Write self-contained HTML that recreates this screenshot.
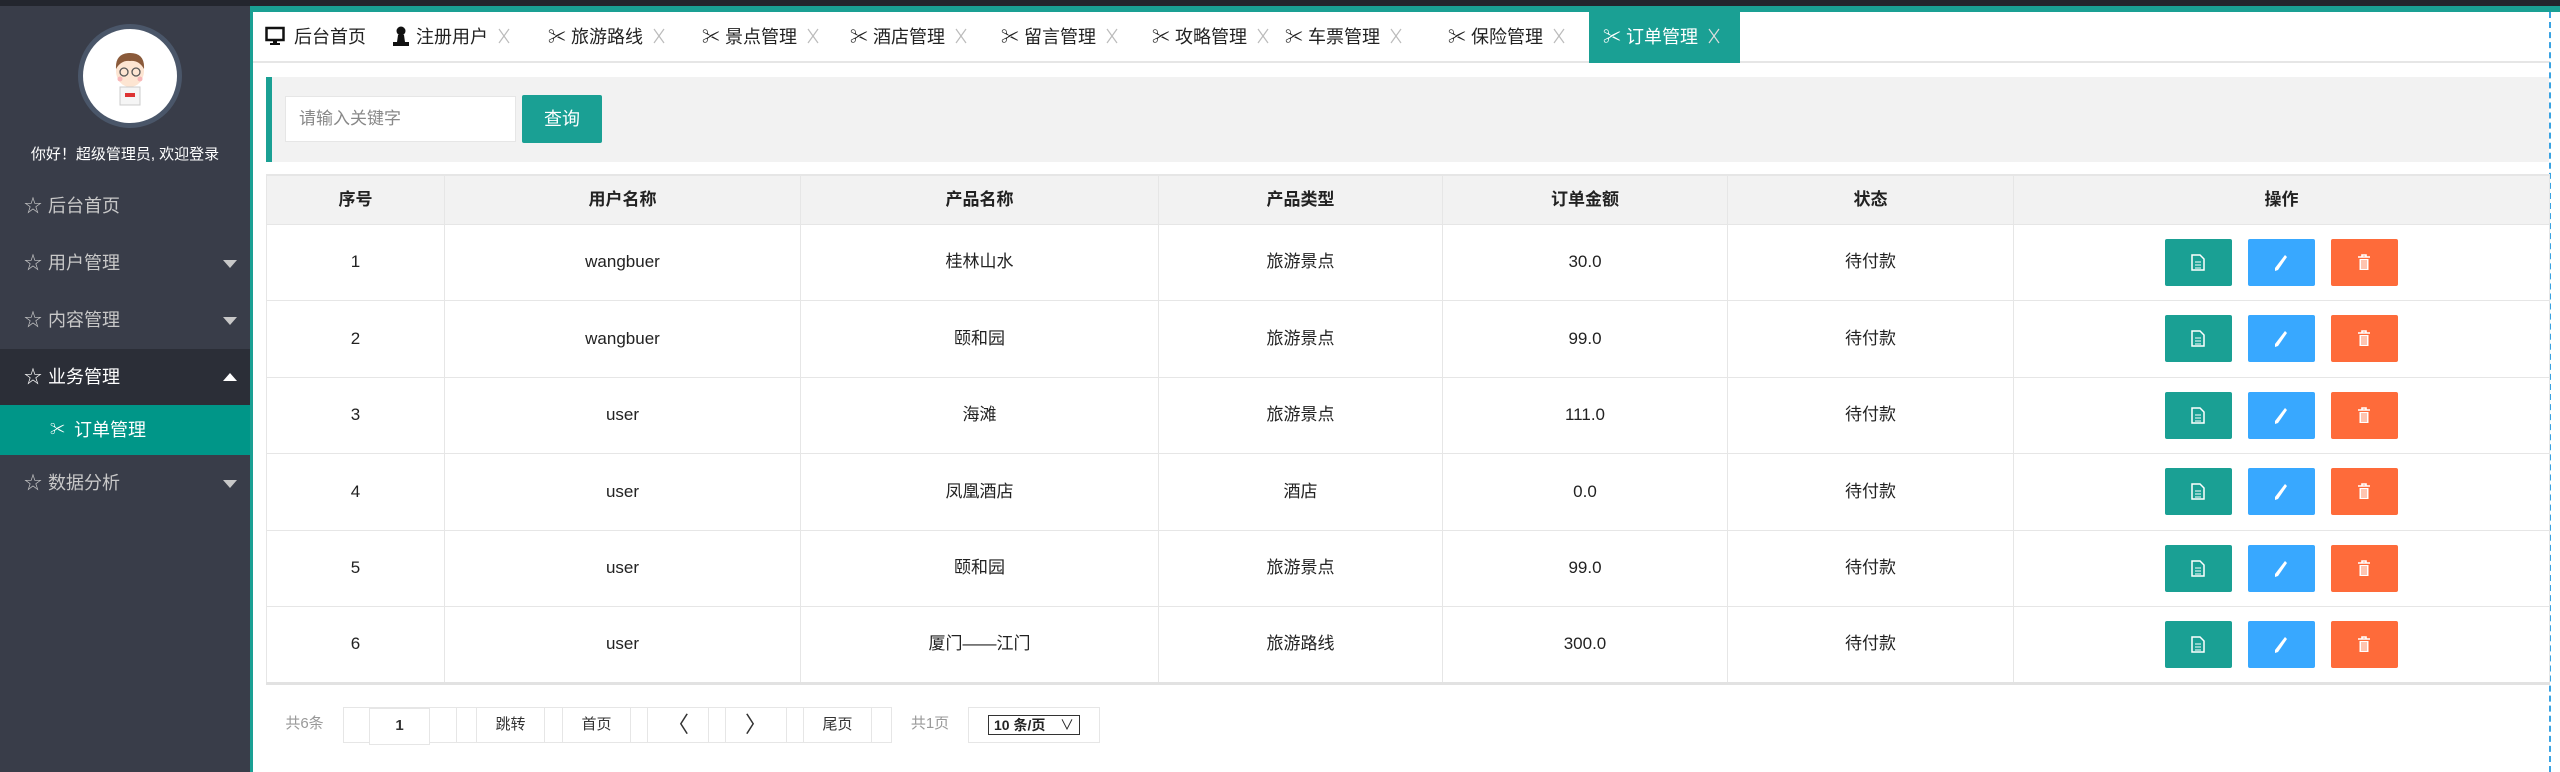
<!DOCTYPE html>
<html><head><meta charset="utf-8"><style>
*{margin:0;padding:0;box-sizing:border-box}
body{width:2560px;height:772px;overflow:hidden;background:#fff;font-family:"Liberation Sans","Noto Sans CJK SC",sans-serif;position:relative;color:#222}
.topbar{position:absolute;left:0;top:0;width:2560px;height:6px;background:#23262e}
.tealbar{position:absolute;left:250px;top:6px;width:2310px;height:6px;background:#1aa094}
.side{position:absolute;left:0;top:6px;width:250px;height:766px;background:#393d49}
.sideline{position:absolute;left:250px;top:6px;width:3px;height:766px;background:#1aa094}
.av{position:absolute;left:78px;top:24px;width:104px;height:104px;border-radius:50%;background:#4a5669;}
.av .in{position:absolute;left:5px;top:5px;width:94px;height:94px;border-radius:50%;background:#fff;overflow:hidden}
.welcome{position:absolute;left:0;top:143px;width:250px;text-align:center;color:#fff;font-size:15px}
.mi{position:absolute;left:0;width:250px;height:57px;color:#c8c8c8;font-size:18px;line-height:57px;padding-left:48px}
.mi .st{position:absolute;left:24px;top:0;font-size:18px}
.mi .ar{position:absolute;left:223px;top:25px;width:0;height:0;border-left:7px solid transparent;border-right:7px solid transparent;border-top:8px solid #c8c8c8}
.mi .up{border-top:none;border-bottom:8px solid #fff;top:24px}
.tabs{position:absolute;left:253px;top:12px;width:2297px;height:51px;border-bottom:2px solid #e6e6e6;background:#fff}
.tab{position:absolute;top:12px;height:51px;line-height:51px;font-size:18px;color:#222;white-space:nowrap}
.tab .x{display:inline-block;margin-left:10px;vertical-align:-1px}
.act{background:#1aa094;color:#fff;left:1589px;width:151px;padding-left:14px}
.dash{position:absolute;left:2549px;top:12px;height:760px;border-left:2px dashed #3aa3e3}
.search{position:absolute;left:266px;top:77px;width:2283px;height:85px;background:#f2f2f2;border-left:6px solid #1aa094}
.inp{position:absolute;left:285px;top:96px;width:231px;height:46px;background:#fff;border:1px solid #e6e6e6;font-size:17px;color:#888;line-height:44px;padding-left:13px}
.btn{position:absolute;left:522px;top:95px;width:80px;height:48px;background:#1aa094;color:#fff;font-size:18px;text-align:center;line-height:48px;border-radius:2px}
table{position:absolute;left:266px;top:174px;width:2283px;border-collapse:collapse;table-layout:fixed}
td,th{border:1px solid #e6e6e6;text-align:center;font-size:17px;line-height:24px;vertical-align:middle}
th{height:49px;background:#f2f2f2;font-weight:bold;border-top:2px solid #e6e6e6}
td{height:76.5px}
tr.last td{border-bottom:3px solid #e2e2e2}
.ob{display:inline-block;width:67px;height:47px;vertical-align:middle;margin:0 8px;border-radius:2px;position:relative}
.g{background:#1aa094}.b{background:#38a8ff}.o{background:#fe6b3a}
.ob svg{position:absolute;left:26px;top:15px}
.pg{position:absolute;top:707px;height:36px;border:1px solid #e6e6e6;background:#fff;font-size:15px;text-align:center;line-height:34px;color:#333}
.pgw{position:absolute;left:266px;top:707px;width:834px;height:36px;border:1px solid #e6e6e6}
.gray{color:#999}
</style></head><body>
<div class="topbar"></div>
<div class="side"></div>
<div class="tealbar"></div>
<div class="sideline"></div>
<div class="av"><div class="in">
<svg width="94" height="94" viewBox="0 0 94 94"><ellipse cx="47" cy="42" rx="14" ry="16" fill="#fde5d2"/><path d="M33 40 Q32 24 47 24 Q62 24 61 40 Q56 31 47 32 Q38 31 33 40Z" fill="#8a5a3a"/><circle cx="41" cy="43" r="4" fill="none" stroke="#555" stroke-width="1.3"/><circle cx="53" cy="43" r="4" fill="none" stroke="#555" stroke-width="1.3"/><rect x="37" y="58" width="20" height="18" fill="#f5f5f5" stroke="#ccc"/><rect x="42" y="64" width="10" height="4" fill="#d33"/><circle cx="37" cy="50" r="2.5" fill="#f8b7b7"/><circle cx="57" cy="50" r="2.5" fill="#f8b7b7"/></svg>
</div></div>
<div class="welcome">你好！超级管理员, 欢迎登录</div>
<div class="mi" style="top:178px"><span class="st">☆</span>后台首页</div>
<div class="mi" style="top:235px"><span class="st">☆</span>用户管理<span class="ar"></span></div>
<div class="mi" style="top:292px"><span class="st">☆</span>内容管理<span class="ar"></span></div>
<div class="mi" style="top:349px;height:56px;background:#2b2e37;color:#fff"><span class="st">☆</span>业务管理<span class="ar up"></span></div>
<div class="mi" style="top:405px;height:50px;line-height:50px;background:#009688;color:#fff;padding-left:74px"><span class="st" style="left:50px;font-size:15px">✂</span>订单管理</div>
<div class="mi" style="top:455px"><span class="st">☆</span>数据分析<span class="ar"></span></div>

<div class="tabs"></div>
<div class="tab" style="left:265px"><svg width="20" height="20" viewBox="0 0 20 20" style="vertical-align:-3px;margin-right:9px"><rect x="1.5" y="2" width="17" height="12" fill="none" stroke="#111" stroke-width="2.5"/><rect x="8" y="14" width="4" height="3" fill="#111"/><rect x="5" y="17" width="10" height="2" fill="#111"/></svg>后台首页</div>
<div class="tab" style="left:392px"><svg width="18" height="20" viewBox="0 0 18 20" style="vertical-align:-3px;margin-right:6px"><circle cx="9" cy="5" r="4.5" fill="#111"/><path d="M6 9h6l1 7h4v4H1v-4h4z" fill="#111"/></svg>注册用户<svg class="x" width="12" height="16" viewBox="0 0 12 16"><path d="M1 1L11 15M11 1L1 15" stroke="#bbb" stroke-width="1.2"/></svg></div>
<div class="tab" style="left:548px">✂ 旅游路线<svg class="x" width="12" height="16" viewBox="0 0 12 16"><path d="M1 1L11 15M11 1L1 15" stroke="#bbb" stroke-width="1.2"/></svg></div>
<div class="tab" style="left:702px">✂ 景点管理<svg class="x" width="12" height="16" viewBox="0 0 12 16"><path d="M1 1L11 15M11 1L1 15" stroke="#bbb" stroke-width="1.2"/></svg></div>
<div class="tab" style="left:850px">✂ 酒店管理<svg class="x" width="12" height="16" viewBox="0 0 12 16"><path d="M1 1L11 15M11 1L1 15" stroke="#bbb" stroke-width="1.2"/></svg></div>
<div class="tab" style="left:1001px">✂ 留言管理<svg class="x" width="12" height="16" viewBox="0 0 12 16"><path d="M1 1L11 15M11 1L1 15" stroke="#bbb" stroke-width="1.2"/></svg></div>
<div class="tab" style="left:1152px">✂ 攻略管理<svg class="x" width="12" height="16" viewBox="0 0 12 16"><path d="M1 1L11 15M11 1L1 15" stroke="#bbb" stroke-width="1.2"/></svg></div>
<div class="tab" style="left:1285px">✂ 车票管理<svg class="x" width="12" height="16" viewBox="0 0 12 16"><path d="M1 1L11 15M11 1L1 15" stroke="#bbb" stroke-width="1.2"/></svg></div>
<div class="tab" style="left:1448px">✂ 保险管理<svg class="x" width="12" height="16" viewBox="0 0 12 16"><path d="M1 1L11 15M11 1L1 15" stroke="#bbb" stroke-width="1.2"/></svg></div>
<div class="tab act">✂ 订单管理<svg class="x" width="12" height="16" viewBox="0 0 12 16"><path d="M1 1L11 15M11 1L1 15" stroke="#ddd" stroke-width="1.2"/></svg></div>
<div class="dash"></div>

<div class="search"></div>
<div class="inp">请输入关键字</div>
<div class="btn">查询</div>

<table>
<colgroup><col style="width:178px"><col style="width:356px"><col style="width:358px"><col style="width:284px"><col style="width:285px"><col style="width:286px"><col style="width:536px"></colgroup>
<tr><th>序号</th><th>用户名称</th><th>产品名称</th><th>产品类型</th><th>订单金额</th><th>状态</th><th>操作</th></tr>
<tr><td>1</td><td>wangbuer</td><td>桂林山水</td><td>旅游景点</td><td>30.0</td><td>待付款</td><td>OPS</td></tr>
<tr><td>2</td><td>wangbuer</td><td>颐和园</td><td>旅游景点</td><td>99.0</td><td>待付款</td><td>OPS</td></tr>
<tr><td>3</td><td>user</td><td>海滩</td><td>旅游景点</td><td>111.0</td><td>待付款</td><td>OPS</td></tr>
<tr><td>4</td><td>user</td><td>凤凰酒店</td><td>酒店</td><td>0.0</td><td>待付款</td><td>OPS</td></tr>
<tr><td>5</td><td>user</td><td>颐和园</td><td>旅游景点</td><td>99.0</td><td>待付款</td><td>OPS</td></tr>
<tr class="last"><td>6</td><td>user</td><td>厦门——江门</td><td>旅游路线</td><td>300.0</td><td>待付款</td><td>OPS</td></tr>
</table>
<script>
var ops='<span class="ob g"><svg width="14" height="17" viewBox="0 0 14 17"><path d="M1 1h8l4 4v11H1z" fill="none" stroke="#fff" stroke-width="1.5"/><path d="M4 8h6M4 11h6M4 14h6" stroke="#fff"/></svg></span><span class="ob b"><svg width="14" height="17" viewBox="0 0 14 17"><path d="M11 1l2 2-9 13-3 1 0-3z" fill="#fff"/></svg></span><span class="ob o"><svg width="14" height="17" viewBox="0 0 14 17"><path d="M1 3h12M5 3V1h4v2" stroke="#fff" stroke-width="1.6" fill="none"/><path d="M2.5 5h9v11h-9z" fill="#fff"/><path d="M5 6v9M7 6v9M9 6v9" stroke="#fe6b3a" stroke-width=".8"/></svg></span>';
document.querySelectorAll('td').forEach(function(t){if(t.textContent==='OPS')t.innerHTML=ops;});
</script>

<div class="pgw"></div>
<div class="pg gray" style="left:266px;width:77px;border:none">共6条</div>
<div style="position:absolute;left:343px;top:707px;width:1px;height:36px;background:#e6e6e6"></div>
<div class="pg" style="left:369px;top:708px;width:61px;height:37px;font-weight:bold">1</div>
<div style="position:absolute;left:456px;top:707px;width:1px;height:36px;background:#e6e6e6"></div>
<div class="pg" style="left:476px;width:69px">跳转</div>
<div class="pg" style="left:562px;width:69px">首页</div>
<div class="pg" style="left:647px;width:62px;font-size:22px">〈</div>
<div class="pg" style="left:725px;width:62px;font-size:22px">〉</div>
<div class="pg" style="left:803px;width:69px">尾页</div>
<div style="position:absolute;left:891px;top:707px;width:1px;height:36px;background:#e6e6e6"></div>
<div class="pg gray" style="left:892px;width:76px;border:none">共1页</div>
<div style="position:absolute;left:968px;top:707px;width:1px;height:36px;background:#e6e6e6"></div>
<div style="position:absolute;left:988px;top:715px;width:92px;height:20px;border:1px solid #333;font-size:14px;font-weight:bold;line-height:18px;padding-left:5px">10 条/页 <span style="position:absolute;right:5px;font-weight:normal">∨</span></div>
</body></html>
